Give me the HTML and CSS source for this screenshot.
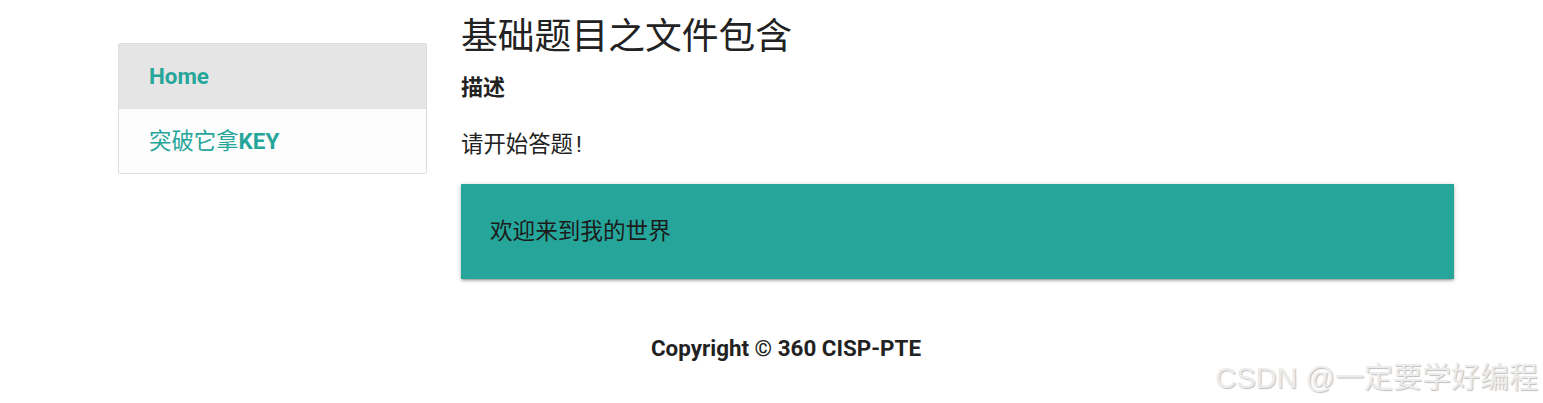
FILE: index.html
```html
<!DOCTYPE html>
<html lang="zh-CN">
<head>
<meta charset="utf-8">
<title>基础题目之文件包含</title>
<link rel="stylesheet" href="styles.css">
</head>
<body>
<div class="page">
  <aside class="side">
    <div class="collection">
      <a class="item active" href="#">Home</a>
      <a class="item" href="#"><span class="cjk">突破它拿</span><b>KEY</b></a>
    </div>
  </aside>
  <main class="main">
    <h1 class="title">基础题目之文件包含</h1>
    <h4 class="desc">描述</h4>
    <p class="prompt">请开始答题<span class="bang">!</span></p>
    <div class="card">欢迎来到我的世界</div>
  </main>
</div>
<footer class="footer">Copyright © 360 CISP-PTE</footer>
<div class="watermark">CSDN @一定要学好编程</div>
</body>
</html>
```
FILE: styles.css
```css
html, body {
  margin: 0;
  padding: 0;
  background: #fff;
}
body {
  font-family: Roboto, "Noto Sans CJK SC", sans-serif;
  color: #222;
  width: 1543px;
  height: 403px;
  position: relative;
  overflow: hidden;
}
.page {
  display: flex;
  align-items: flex-start;
  margin-left: 118px;
  gap: 34px;
}
.side {
  width: 309px;
  margin-top: 43px;
}
.collection {
  border: 1px solid #ddd;
  border-radius: 2px;
  overflow: hidden;
}
.item {
  display: block;
  height: 64px;
  line-height: 64px;
  padding-left: 30px;
  font-size: 22.4px;
  color: #26a69a;
  text-decoration: none;
  background: #fdfdfd;
  font-weight: 400;
}
.item.active {
  background: #e5e5e5;
  height: 64px;
  line-height: 64px;
  border-bottom: 1px solid #e0e0e0;
  font-weight: 700;
}
.item b {
  font-weight: 700;
}
.main {
  width: 993px;
}
.title {
  font-size: 36.8px;
  font-weight: 400;
  line-height: 44px;
  margin: 15px 0 0;
}
.desc {
  font-size: 22px;
  font-weight: 700;
  line-height: 30px;
  margin: 14px 0 0;
}
.prompt {
  font-size: 22.4px;
  line-height: 30px;
  margin: 26px 0 0;
}
.bang {
  margin-left: 3px;
}
.card {
  margin-top: 25px;
  background: #26a69a;
  padding: 32px 29px;
  line-height: 31px;
  font-size: 22.6px;
  color: #1b1b1b;
  box-shadow: 0 2px 2px 0 rgba(0,0,0,0.14), 0 3px 1px -2px rgba(0,0,0,0.12), 0 1px 5px 0 rgba(0,0,0,0.2);
}
.footer {
  margin-left: 103px;
  width: 1366px;
  text-align: center;
  margin-top: 54px;
  font-size: 22.4px;
  line-height: 30px;
  font-weight: 700;
  color: #222;
}
.watermark {
  position: absolute;
  right: 5px;
  top: 360px;
  font-family: "Liberation Sans", "Noto Sans CJK SC", sans-serif;
  font-size: 29px;
  line-height: 36px;
  color: #ececec;
  text-shadow: 1px 1px 1px rgba(0,0,0,0.25);
  white-space: nowrap;
}
```
